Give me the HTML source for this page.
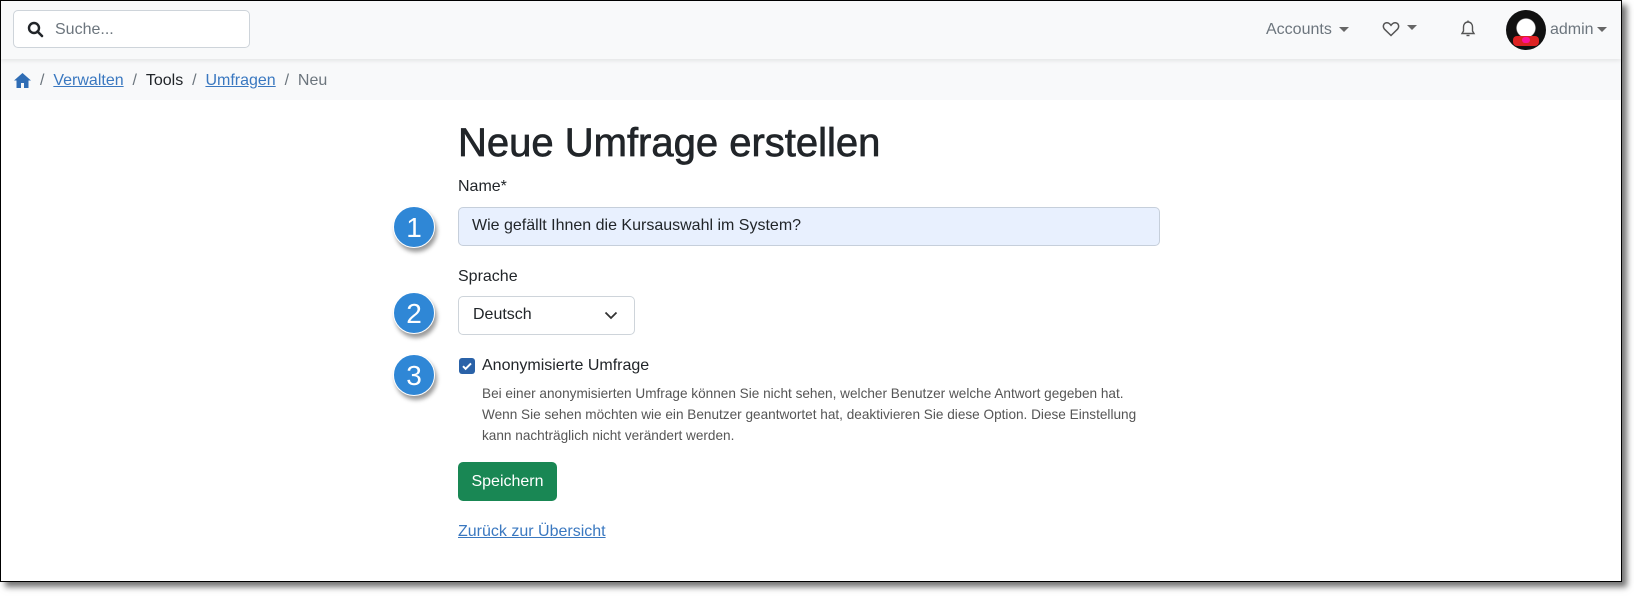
<!DOCTYPE html>
<html><head><meta charset="utf-8"><style>
*{box-sizing:border-box;margin:0;padding:0}
body{width:1634px;height:596px;background:#fff;font-family:"Liberation Sans",sans-serif;position:relative;overflow:hidden;color:#212529}
.frame{position:absolute;left:0;top:0;width:1622px;height:582px;border:1px solid #000;background:#fff;box-shadow:5px 5px 6px rgba(0,0,0,.55)}
.nav{position:absolute;left:0;top:0;width:1620px;height:58px;background:#f8f9fa;box-shadow:0 2px 4px rgba(0,0,0,.08);z-index:2}
.crumb{position:absolute;left:0;top:58px;width:1620px;height:41px;background:#f8f9fa}
.search{position:absolute;left:12px;top:9px;width:237px;height:38px;border:1px solid #ced4da;border-radius:5px;background:#fff}
.search span{position:absolute;left:41px;top:10px;font-size:16px;color:#6c757d}
.abs{position:absolute;white-space:nowrap}
a{color:#3a78c0;text-decoration:underline}
.badge{position:absolute;width:42px;height:42px;border-radius:50%;background:#2f87d6;color:#fff;font-size:28px;text-align:center;line-height:42px;box-shadow:2px 4px 4px rgba(0,0,0,.4);border:1px solid #fff}
.caret{display:inline-block;border-left:5px solid transparent;border-right:5px solid transparent;border-top:5px solid #666;vertical-align:middle;margin-left:7px}
</style></head><body>
<div class="frame">
<div class="nav">
 <div class="search">
  <svg style="position:absolute;left:13px;top:10px" width="17" height="17" viewBox="0 0 17 17"><circle cx="7" cy="7" r="5" fill="none" stroke="#212529" stroke-width="2.4"/><path d="M10.5 10.5L15 15" stroke="#212529" stroke-width="2.6" stroke-linecap="round"/></svg>
  <span>Suche...</span>
 </div>
 <div class="abs" style="left:1265px;top:20px;font-size:16px;color:#6c757d">Accounts<span class="caret"></span></div>
 <div class="abs" style="left:1381px;top:20px"><svg width="18" height="16" viewBox="0 0 18 16"><path d="M9 14.5L2.5 8.2C0.5 6 1.2 2.2 4.4 1.8 6.5 1.5 8 3 9 4.3 10 3 11.5 1.5 13.6 1.8 16.8 2.2 17.5 6 15.5 8.2Z" fill="none" stroke="#555" stroke-width="1.5"/></svg><span class="caret" style="margin-top:-10px"></span></div>
 <div class="abs" style="left:1459px;top:19px"><svg width="16" height="18" viewBox="0 0 16 18"><path d="M8 2C5 2 3.5 4.5 3.5 7v4L2 13.5h12L12.5 11V7C12.5 4.5 11 2 8 2Z" fill="none" stroke="#555" stroke-width="1.4"/><path d="M6.5 15.5h3" stroke="#555" stroke-width="1.4"/><path d="M8 .5v1.5" stroke="#555" stroke-width="1.4"/></svg></div>
 <div class="abs" style="left:1505px;top:9px;width:40px;height:40px;border-radius:50%;background:radial-gradient(circle at 50% 45%,#fff 0 9px,#111 10px);overflow:hidden">
  <div style="position:absolute;left:7px;top:26px;width:26px;height:10px;background:#d22;border-radius:4px"></div>
  <div style="position:absolute;left:16px;top:27px;width:8px;height:6px;background:#f19;border-radius:3px"></div>
 </div>
 <div class="abs" style="left:1549px;top:20px;font-size:16px;color:#6c757d">admin<span class="caret" style="margin-left:3px"></span></div>
</div>
<div class="crumb">
 <svg style="position:absolute;left:12px;top:13px" width="19" height="17" viewBox="0 0 19 17"><path d="M9.5 1L1 8.5h2.5V16h4.5v-5h3v5h4.5V8.5H18Z" fill="#2f6db5"/></svg>
 <div class="abs" style="left:39px;top:13px;font-size:16px;color:#6c757d">/ &nbsp;<a href="#">Verwalten</a>&nbsp; / &nbsp;<span style="color:#212529">Tools</span>&nbsp; / &nbsp;<a href="#">Umfragen</a>&nbsp; / &nbsp;Neu</div>
</div>
<div class="abs" style="left:457px;top:120px;font-size:40px;color:#212529;-webkit-text-stroke:0.7px #212529">Neue Umfrage erstellen</div>
<div class="abs" style="left:457px;top:177px;font-size:16px">Name*</div>
<div class="abs" style="left:457px;top:206px;width:702px;height:39px;background:#e8f0fe;border:1px solid #c6cfdb;border-radius:5px;font-size:16px;padding:9px 13px">Wie gefällt Ihnen die Kursauswahl im System?</div>
<div class="abs" style="left:457px;top:267px;font-size:16px">Sprache</div>
<div class="abs" style="left:457px;top:295px;width:177px;height:39px;border:1px solid #ced4da;border-radius:5px;font-size:16px;padding:9px 14px">Deutsch
 <svg style="position:absolute;right:16px;top:14px" width="14" height="9" viewBox="0 0 14 9"><path d="M1.5 1.5L7 7l5.5-5.5" fill="none" stroke="#333" stroke-width="1.8"/></svg></div>
<div class="abs" style="left:458px;top:357px;width:16px;height:16px;background:#2a62a8;border-radius:3px"><svg width="16" height="16" viewBox="0 0 16 16"><path d="M4 8.2l2.6 2.6L12 5.4" fill="none" stroke="#fff" stroke-width="2"/></svg></div>
<div class="abs" style="left:481px;top:356px;font-size:16px">Anonymisierte Umfrage</div>
<div class="abs" style="left:481px;top:382px;font-size:13.6px;color:#555;line-height:21px">Bei einer anonymisierten Umfrage können Sie nicht sehen, welcher Benutzer welche Antwort gegeben hat.<br>Wenn Sie sehen möchten wie ein Benutzer geantwortet hat, deaktivieren Sie diese Option. Diese Einstellung<br>kann nachträglich nicht verändert werden.</div>
<div class="abs" style="left:457px;top:461px;width:99px;height:39px;background:#198754;border-radius:5px;color:#fff;font-size:16px;text-align:center;line-height:39px">Speichern</div>
<div class="abs" style="left:457px;top:522px;font-size:16px"><a href="#">Zurück zur Übersicht</a></div>
<div class="badge" style="left:392px;top:205px">1</div>
<div class="badge" style="left:392px;top:291px">2</div>
<div class="badge" style="left:392px;top:353px">3</div>
</div>
</body></html>
